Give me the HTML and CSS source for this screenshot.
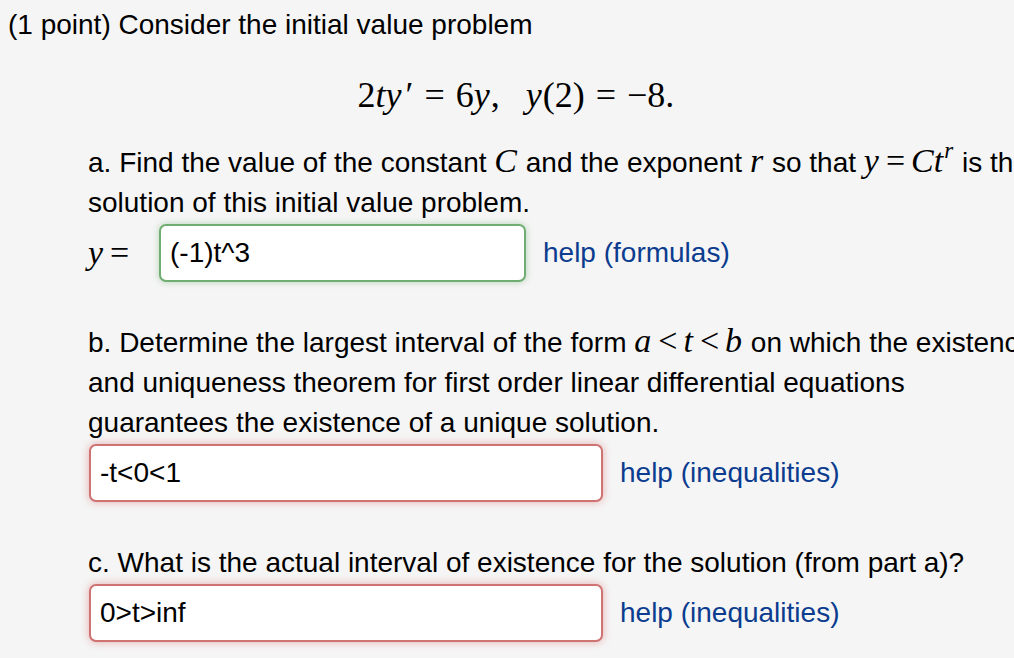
FILE: index.html
```html
<!DOCTYPE html>
<html lang="en">
<head>
    <meta charset="UTF-8">
    <title>Problem</title>
    <link rel="stylesheet" href="styles.css">
</head>
<body>

<div class="problem">

    <!-- Problem statement -->
    <p class="intro">(1 point) Consider the initial value problem</p>

    <div class="display-math">
        <span class="mn">2</span><i>ty</i><span class="prime">&prime;</span><span class="mo">=</span><span class="mn">6</span><i>y</i>,<span class="mspace"></span><i>y</i>(<span class="mn">2</span>)<span class="mo">=</span>&minus;8.
    </div>

    <!-- Part a -->
    <div class="part">
        <p>a. Find the value of the constant <i class="m">C</i> and the exponent <i class="m">r</i> so that <span class="m"><i>y</i><span class="mo">=</span><i>Ct</i><sup><i>r</i></sup></span> is the solution of this initial value problem.</p>
        <div class="answer-row">
            <span class="m label"><i>y</i><span class="mo">=</span></span>
            <input class="answer correct short" type="text" value="(-1)t^3">
            <a class="help" href="#">help (formulas)</a>
        </div>
    </div>

    <!-- Part b -->
    <div class="part">
        <p>b. Determine the largest interval of the form <span class="m"><i>a</i><span class="mo">&lt;</span><i>t</i><span class="mo">&lt;</span><i>b</i></span> on which the existence and uniqueness theorem for first order linear differential equations guarantees the existence of a unique solution.</p>
        <div class="answer-row">
            <input class="answer incorrect" type="text" value="-t<0<1">
            <a class="help" href="#">help (inequalities)</a>
        </div>
    </div>

    <!-- Part c -->
    <div class="part">
        <p>c. What is the actual interval of existence for the solution (from part a)?</p>
        <div class="answer-row">
            <input class="answer incorrect" type="text" value="0>t>inf">
            <a class="help" href="#">help (inequalities)</a>
        </div>
    </div>

</div>

</body>
</html>
```

FILE: styles.css
```css
/* Basic Reset */
* {
    margin: 0;
    padding: 0;
    box-sizing: border-box;
}

html, body {
    overflow: hidden;
}

body {
    font-family: 'Liberation Sans', Arial, sans-serif;
    font-size: 28px;
    line-height: 40px;
    color: #000;
    background-color: #f5f5f5;
}

.problem {
    width: 1024px;
    padding: 5px 0 0 8px;
}

/* Math */
.display-math {
    margin: 30px 0 28px;
    text-align: center;
    font-family: 'Liberation Serif', 'Times New Roman', serif;
    font-size: 36px;
    line-height: 40px;
}

.display-math i {
    margin-right: 1px;
}

.mo {
    margin: 0 11px;
    font-style: normal;
}

.prime {
    margin-left: 3px;
}

.mspace {
    display: inline-block;
    width: 26px;
}

.m {
    font-family: 'Liberation Serif', 'Times New Roman', serif;
    font-size: 34px;
    line-height: 1;
    font-style: normal;
}

i.m,
.m i {
    font-style: italic;
    margin-right: 1px;
}

.m .mo {
    margin: 0 6px;
}

.m sup {
    font-size: 23px;
    line-height: 0;
    vertical-align: 14px;
}

/* Parts */
.part {
    width: 1042px;
    padding-left: 80px;
}

.answer-row {
    display: flex;
    align-items: center;
    height: 60px;
    margin-bottom: 40px;
}

.label {
    width: 71px;
}

.answer {
    height: 58px;
    width: 514px;
    margin-left: 1px;
    padding: 0 9px;
    font-family: 'Liberation Sans', Arial, sans-serif;
    font-size: 28px;
    color: #000;
    background-color: #fff;
    border: 2px solid #ccc;
    border-radius: 7px;
    outline: none;
}

.answer.short {
    width: 367px;
    margin-left: 0;
}

.answer.correct {
    border-color: #70ad70;
    box-shadow: 0 0 7px rgba(60, 140, 60, 0.35);
}

.answer.incorrect {
    border-color: #cf7272;
    box-shadow: 0 0 8px rgba(200, 40, 40, 0.35);
}

.help {
    margin-left: 17px;
    color: #0b3c8f;
    text-decoration: none;
}
```
